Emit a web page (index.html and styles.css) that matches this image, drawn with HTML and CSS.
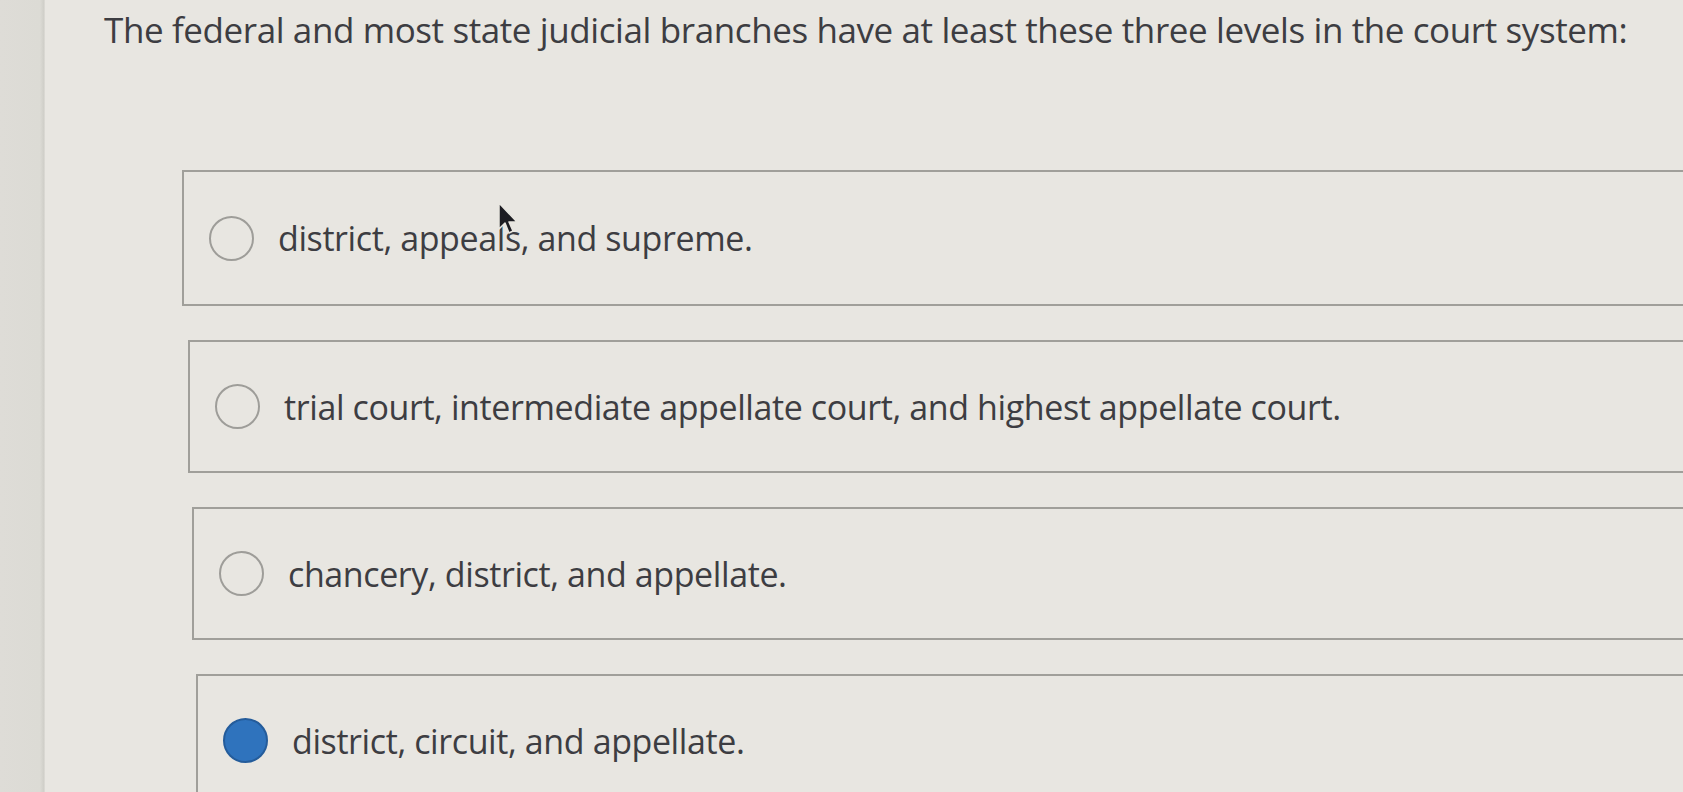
FILE: index.html
```html
<!DOCTYPE html>
<html lang="en">
<head>
<meta charset="utf-8">
<title>Question</title>
<link rel="stylesheet" href="styles.css">
</head>
<body>
<div class="frame">
  <div class="edge"></div>
  <main class="main">
    <h1 class="question">The federal and most state judicial branches have at least these three levels in the court system:</h1>
    <div class="options">
      <label class="option opt-1">
        <span class="radio"></span>
        <span class="label">district, appeals, and supreme.</span>
      </label>
      <label class="option opt-2">
        <span class="radio"></span>
        <span class="label">trial court, intermediate appellate court, and highest appellate court.</span>
      </label>
      <label class="option opt-3">
        <span class="radio"></span>
        <span class="label">chancery, district, and appellate.</span>
      </label>
      <label class="option opt-4">
        <span class="radio checked"></span>
        <span class="label">district, circuit, and appellate.</span>
      </label>
    </div>
  </main>
</div>
<svg class="pointer" width="22" height="34" viewBox="0 0 22 34" aria-hidden="true">
  <path d="M2 1 L2 27 L8 21 L12 31 L16 29 L12 20 L20 20 Z" fill="#1c1c22" stroke="#e8e6e0" stroke-width="1.5" stroke-linejoin="round"/>
</svg>
</body>
</html>
```
FILE: styles.css
```css
html, body {
  margin: 0;
  padding: 0;
  height: 100%;
  overflow: hidden;
}

body {
  background: #e8e6e1;
  font-family: "Open Sans", "Noto Sans", sans-serif;
  color: #3d3d42;
}

.frame {
  display: flex;
  min-height: 100vh;
}

.edge {
  flex: 0 0 45px;
  background: linear-gradient(to right, #dedcd7 0, #dcdbd5 40px, #cfcec8 44px, #e4e2dd 45px);
}

.main {
  flex: 1;
  padding: 6px 0 0 59px;
  min-width: 0;
}

.question {
  margin: 0;
  font-size: 35px;
  font-weight: 400;
  line-height: 48px;
  letter-spacing: -0.4px;
  white-space: nowrap;
}

.options {
  display: flex;
  flex-direction: column;
  gap: 34px;
  margin-top: 116px;
}

.option {
  display: flex;
  align-items: center;
  height: 129px;
  border: 2px solid #a09f9a;
  border-right: none;
  margin-right: -20px;
  padding-left: 25px;
  font-size: 34px;
  letter-spacing: -0.4px;
  white-space: nowrap;
}

.opt-1 { margin-left: 78px; height: 132px; }
.opt-2 { margin-left: 84px; }
.opt-3 { margin-left: 88px; }
.opt-4 { margin-left: 92px; }

.radio {
  flex: 0 0 auto;
  width: 41px;
  height: 41px;
  border: 2px solid #9e9d99;
  border-radius: 50%;
  margin-right: 24px;
}

.radio.checked {
  border-color: #245c9b;
  background: #2f73bd;
}

.pointer {
  position: absolute;
  left: 497px;
  top: 202px;
}
```
